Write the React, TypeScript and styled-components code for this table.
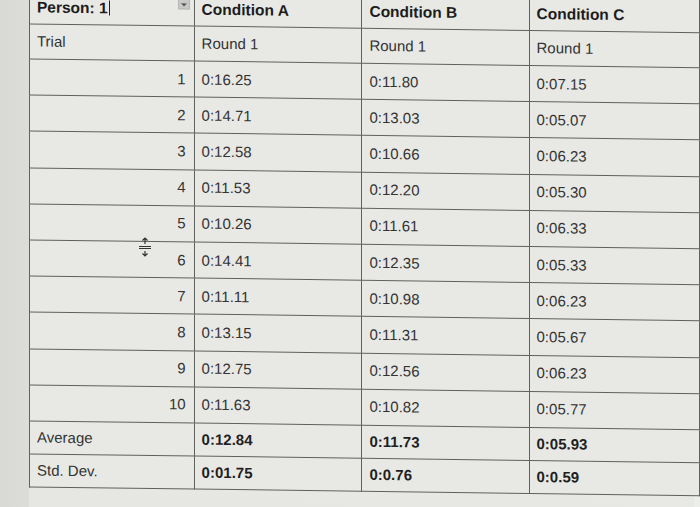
import React from "react";
import styled, { createGlobalStyle } from "styled-components";

const Global = createGlobalStyle`
  html, body { margin: 0; padding: 0; }
  body {
    width: 700px;
    height: 507px;
    overflow: hidden;
    background: #e2e3df;
    font-family: "Liberation Sans", Arial, sans-serif;
  }
`;

const Page = styled.div`
  width: 700px;
  height: 507px;
  display: flex;
  flex-direction: column;
  background: linear-gradient(to right, #d9dad6 0px, #dcddd9 29px, #e6e7e3 29px, #e8e9e5 694px, #eceeea 694px);
  position: relative;
  overflow: hidden;
`;

const Sheet = styled.div`
  margin-top: -11px;
  padding-left: 29px;
  transform: skewY(0.75deg);
  transform-origin: 0 0;
`;

const Table = styled.table`
  border-collapse: collapse;
  table-layout: fixed;
  background: #e8e9e5;
  color: #2e2e2e;
  font-size: 15px;
`;

const Row = styled.tr<{ $h: number }>`
  height: ${(p) => p.$h}px;
`;

const Cell = styled.td<{ $w?: number; $right?: boolean; $bold?: boolean }>`
  position: relative;
  width: ${(p) => (p.$w ? `${p.$w - 1}px` : "auto")};
  border: 1.3px solid #5f615f;
  padding: 0 8px 0 7px;
  text-align: ${(p) => (p.$right ? "right" : "left")};
  font-weight: ${(p) => (p.$bold ? 700 : 400)};
  color: ${(p) => (p.$bold ? "#1f1f1f" : "#333")};
  vertical-align: middle;
  white-space: nowrap;
  line-height: 18px;
`;

const HeadCell = styled(Cell)`
  font-weight: 700;
  font-size: 15.5px;
  color: #1c1c1c;
`;

const Caret = styled.span`
  display: inline-block;
  width: 1.5px;
  height: 15px;
  margin-left: 1px;
  vertical-align: -2px;
  background: #222;
`;

const DropBox = styled.span`
  position: absolute;
  right: 4px;
  top: 5px;
  width: 10px;
  height: 10px;
  background: #c9cac7;
  border: 1px solid #b5b6b3;
  display: flex;
  align-items: flex-end;
  justify-content: center;
  &::after {
    content: "";
    border-left: 3px solid transparent;
    border-right: 3px solid transparent;
    border-top: 3px solid #555;
    margin-bottom: 2px;
  }
`;

const ResizeCursor = styled.svg`
  position: absolute;
  left: 138px;
  top: 236px;
`;

const widths = [165, 166, 165, 169];

const data: [string, string, string][] = [
  ["0:16.25", "0:11.80", "0:07.15"],
  ["0:14.71", "0:13.03", "0:05.07"],
  ["0:12.58", "0:10.66", "0:06.23"],
  ["0:11.53", "0:12.20", "0:05.30"],
  ["0:10.26", "0:11.61", "0:06.33"],
  ["0:14.41", "0:12.35", "0:05.33"],
  ["0:11.11", "0:10.98", "0:06.23"],
  ["0:13.15", "0:11.31", "0:05.67"],
  ["0:12.75", "0:12.56", "0:06.23"],
  ["0:11.63", "0:10.82", "0:05.77"],
];

export default function App() {
  return (
    <>
      <Global />
      <Page>
        <Sheet>
          <Table>
            <tbody>
              <Row $h={34}>
                <HeadCell $w={widths[0]}>
                  Person: 1<Caret />
                  <DropBox />
                </HeadCell>
                <HeadCell $w={widths[1]}>Condition A</HeadCell>
                <HeadCell $w={widths[2]}>Condition B</HeadCell>
                <HeadCell $w={widths[3]}>Condition C</HeadCell>
              </Row>
              <Row $h={35}>
                <Cell>Trial</Cell>
                <Cell>Round 1</Cell>
                <Cell>Round 1</Cell>
                <Cell>Round 1</Cell>
              </Row>
              {data.map((r, i) => (
                <Row $h={36.2} key={i}>
                  <Cell $right>{i + 1}</Cell>
                  <Cell>{r[0]}</Cell>
                  <Cell>{r[1]}</Cell>
                  <Cell>{r[2]}</Cell>
                </Row>
              ))}
              <Row $h={33}>
                <Cell>Average</Cell>
                <Cell $bold>0:12.84</Cell>
                <Cell $bold>0:11.73</Cell>
                <Cell $bold>0:05.93</Cell>
              </Row>
              <Row $h={33}>
                <Cell>Std. Dev.</Cell>
                <Cell $bold>0:01.75</Cell>
                <Cell $bold>0:0.76</Cell>
                <Cell $bold>0:0.59</Cell>
              </Row>
            </tbody>
          </Table>
        </Sheet>
        <ResizeCursor width="14" height="22" viewBox="0 0 14 22">
          <path d="M7 2 L7 8 M4.5 4.5 L7 2 L9.5 4.5" stroke="#333" strokeWidth="1.2" fill="none" />
          <path d="M1 10.5 H13 M1 12.5 H13" stroke="#333" strokeWidth="1.1" />
          <path d="M7 15 L7 20 M4.5 17.5 L7 20 L9.5 17.5" stroke="#333" strokeWidth="1.2" fill="none" />
        </ResizeCursor>
      </Page>
    </>
  );
}
